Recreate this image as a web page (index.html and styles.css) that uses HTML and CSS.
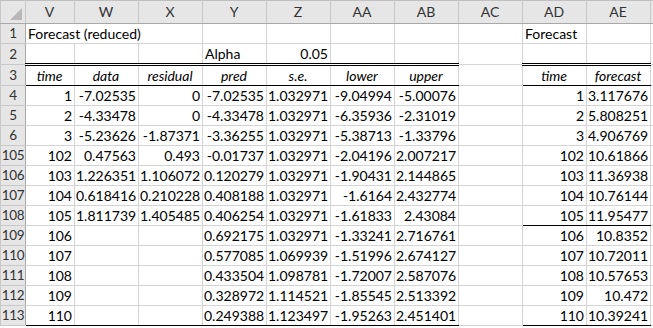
FILE: index.html
```html
<!DOCTYPE html>
<html>
<head>
<meta charset="utf-8">
<link rel="stylesheet" href="styles.css">
</head>
<body>
<table class="sheet">
<colgroup>
<col class="c-rh"><col class="c-v"><col class="c-n"><col class="c-n"><col class="c-n"><col class="c-n"><col class="c-n"><col class="c-n"><col class="c-n"><col class="c-n"><col class="c-n"><col class="c-x">
</colgroup>
<thead>
<tr class="hdr">
<th class="corner"><span class="tri"></span></th><th>V</th><th>W</th><th>X</th><th>Y</th><th>Z</th><th>AA</th><th>AB</th><th>AC</th><th>AD</th><th>AE</th><th></th>
</tr>
</thead>
<tbody>
<tr><th class="rh">1</th><td colspan="3" class="l ov">Forecast (reduced)</td><td></td><td></td><td></td><td></td><td></td><td class="l">Forecast</td><td></td><td></td></tr>
<tr class="dbl"><th class="rh">2</th><td class="b"></td><td class="b"></td><td class="b"></td><td class="l b">Alpha</td><td class="b">0.05</td><td class="b"></td><td class="b"></td><td></td><td class="b"></td><td class="b"></td><td></td></tr>
<tr class="it"><th class="rh">3</th><td class="c b">time</td><td class="c b">data</td><td class="c b">residual</td><td class="c b">pred</td><td class="c b">s.e.</td><td class="c b">lower</td><td class="c b">upper</td><td></td><td class="c b">time</td><td class="c b">forecast</td><td></td></tr>
<tr><th class="rh">4</th><td>1</td><td>-7.02535</td><td>0</td><td>-7.02535</td><td>1.032971</td><td>-9.04994</td><td>-5.00076</td><td></td><td>1</td><td>3.117676</td><td></td></tr>
<tr><th class="rh">5</th><td>2</td><td>-4.33478</td><td>0</td><td>-4.33478</td><td>1.032971</td><td>-6.35936</td><td>-2.31019</td><td></td><td>2</td><td>5.808251</td><td></td></tr>
<tr><th class="rh">6</th><td>3</td><td>-5.23626</td><td>-1.87371</td><td>-3.36255</td><td>1.032971</td><td>-5.38713</td><td>-1.33796</td><td></td><td>3</td><td>4.906769</td><td></td></tr>
<tr><th class="rh">105</th><td>102</td><td>0.47563</td><td>0.493</td><td>-0.01737</td><td>1.032971</td><td>-2.04196</td><td>2.007217</td><td></td><td>102</td><td>10.61866</td><td></td></tr>
<tr><th class="rh">106</th><td>103</td><td>1.226351</td><td>1.106072</td><td>0.120279</td><td>1.032971</td><td>-1.90431</td><td>2.144865</td><td></td><td>103</td><td>11.36938</td><td></td></tr>
<tr><th class="rh">107</th><td>104</td><td>0.618416</td><td>0.210228</td><td>0.408188</td><td>1.032971</td><td>-1.6164</td><td>2.432774</td><td></td><td>104</td><td>10.76144</td><td></td></tr>
<tr><th class="rh">108</th><td>105</td><td>1.811739</td><td>1.405485</td><td>0.406254</td><td>1.032971</td><td>-1.61833</td><td>2.43084</td><td></td><td class="b">105</td><td class="b">11.95477</td><td></td></tr>
<tr><th class="rh">109</th><td>106</td><td></td><td></td><td>0.692175</td><td>1.032971</td><td>-1.33241</td><td>2.716761</td><td></td><td>106</td><td>10.8352</td><td></td></tr>
<tr><th class="rh">110</th><td>107</td><td></td><td></td><td>0.577085</td><td>1.069939</td><td>-1.51996</td><td>2.674127</td><td></td><td>107</td><td>10.72011</td><td></td></tr>
<tr><th class="rh">111</th><td>108</td><td></td><td></td><td>0.433504</td><td>1.098781</td><td>-1.72007</td><td>2.587076</td><td></td><td>108</td><td>10.57653</td><td></td></tr>
<tr><th class="rh">112</th><td>109</td><td></td><td></td><td>0.328972</td><td>1.114521</td><td>-1.85545</td><td>2.513392</td><td></td><td>109</td><td>10.472</td><td></td></tr>
<tr><th class="rh">113</th><td class="b">110</td><td class="b"></td><td class="b"></td><td class="b">0.249388</td><td class="b">1.123497</td><td class="b">-1.95263</td><td class="b">2.451401</td><td></td><td class="b">110</td><td class="b">10.39241</td><td></td></tr>
</tbody>
</table>
</body>
</html>
```
FILE: styles.css
```css
html, body {
  margin: 0;
  padding: 0;
  background: #ffffff;
  overflow: hidden;
}
.sheet {
  border-collapse: collapse;
  table-layout: fixed;
  width: 690px;
  font-family: Lato, "Open Sans", sans-serif;
  font-size: 14px;
  color: #000;
}
.c-rh { width: 25px; }
.c-v { width: 49px; }
.c-n { width: 64px; }
.c-x { width: 40px; }
.sheet th, .sheet td {
  padding: 0 2px 0 1px;
  border: 1px solid #d4d4d4;
  white-space: nowrap;
  overflow: visible;
  height: 19px;
  line-height: 19px;
}
.sheet td { text-align: right; }
.hdr th {
  height: 22px;
  line-height: 22px;
  background: #e6e6e6;
  color: #333;
  font-weight: normal;
  text-align: center;
  border-color: #bfbfbf #c8c8c8 #a8a8a8 #c8c8c8;
}
.corner { position: relative; }
.tri {
  position: absolute;
  right: 3px;
  bottom: 3px;
  width: 0;
  height: 0;
  border-left: 12px solid transparent;
  border-bottom: 12px solid #b8b8b8;
}
.sheet .rh {
  background: #e6e6e6;
  color: #333;
  font-weight: normal;
  font-size: 13.5px;
  letter-spacing: -0.3px;
  text-align: center;
  padding: 0;
  border-color: #c8c8c8 #a8a8a8 #c8c8c8 #c8c8c8;
}
.sheet td.l { text-align: left; padding-left: 2px; }
.sheet td.c { text-align: center; }
.it td { font-style: italic; }
.sheet td.b { border-bottom: 1px solid #000; }
.sheet .dbl td.b { border-bottom: 3px double #000; }
```
